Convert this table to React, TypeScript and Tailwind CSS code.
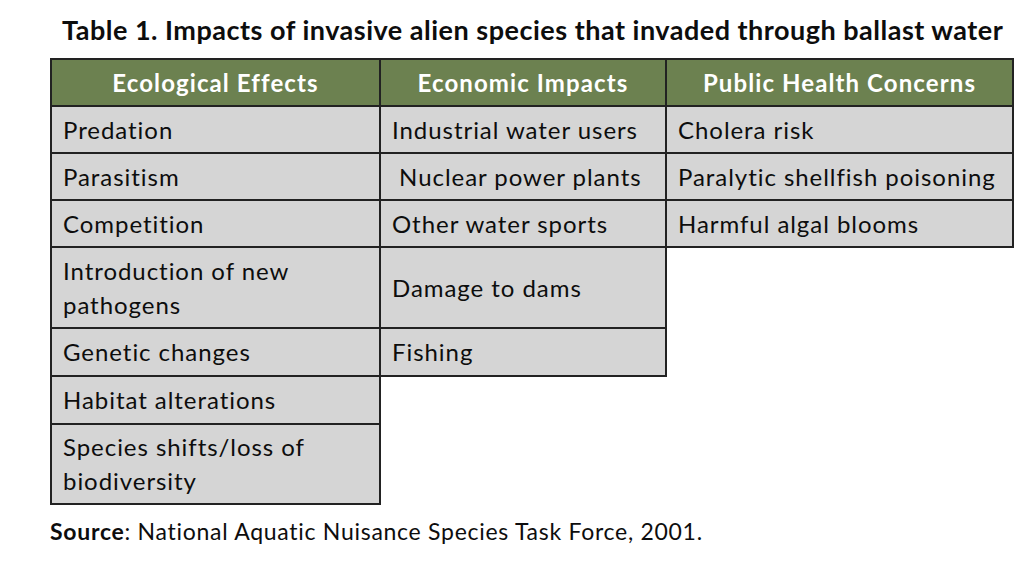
const font = { fontFamily: "Lato, 'Open Sans', sans-serif" };

type Cell = { text: string; col: number; row: number };

const cells: Cell[] = [
  { text: "Predation", col: 1, row: 2 },
  { text: "Parasitism", col: 1, row: 3 },
  { text: "Competition", col: 1, row: 4 },
  { text: "Introduction of new pathogens", col: 1, row: 5 },
  { text: "Genetic changes", col: 1, row: 6 },
  { text: "Habitat alterations", col: 1, row: 7 },
  { text: "Species shifts/loss of biodiversity", col: 1, row: 8 },
  { text: "Industrial water users", col: 2, row: 2 },
  { text: "\u00a0Nuclear power plants", col: 2, row: 3 },
  { text: "Other water sports", col: 2, row: 4 },
  { text: "Damage to dams", col: 2, row: 5 },
  { text: "Fishing", col: 2, row: 6 },
  { text: "Cholera risk", col: 3, row: 2 },
  { text: "Paralytic shellfish poisoning", col: 3, row: 3 },
  { text: "Harmful algal blooms", col: 3, row: 4 },
];

const colClass: Record<number, string> = {
  1: "col-start-1",
  2: "col-start-2",
  3: "col-start-3",
};

const rowClass: Record<number, string> = {
  1: "row-start-1",
  2: "row-start-2",
  3: "row-start-3",
  4: "row-start-4",
  5: "row-start-5",
  6: "row-start-6",
  7: "row-start-7",
  8: "row-start-8",
};

const headers = ["Ecological Effects", "Economic Impacts", "Public Health Concerns"];

export default function App() {
  return (
    <div className="w-[1024px] h-[577px] bg-white text-[#0d0d0d]" style={font}>
      <h1 className="pt-[13px] pl-[62px] text-[27px] font-bold leading-[34px] tracking-[0.5px] whitespace-nowrap">
        Table 1. Impacts of invasive alien species that invaded through ballast water
      </h1>

      {/* Table */}
      <div className="ml-[50px] mt-[11px] grid grid-cols-[329px_286px_347px] grid-rows-[47px_47px_47px_47px_81px_48px_48px_80px] w-[964px]">
        {headers.map((h, i) => (
          <div
            key={h}
            className={`${colClass[i + 1]} row-start-1 -mr-[2px] -mb-[2px] border-2 border-[#222] bg-[#6c8150] flex items-center justify-center text-white font-bold text-[24px] tracking-[1.1px] whitespace-nowrap`}
          >
            {h}
          </div>
        ))}
        {cells.map((c) => (
          <div
            key={c.text}
            className={`${colClass[c.col]} ${rowClass[c.row]} -mr-[2px] -mb-[2px] border-2 border-[#222] bg-[#d5d5d5] flex items-center pl-[11px] pr-1 text-[24px] leading-[34px] tracking-[0.95px]`}
          >
            <span>{c.text}</span>
          </div>
        ))}
      </div>

      <p className="pl-[50px] mt-[13px] text-[23px] leading-[30px] tracking-[0.72px] whitespace-nowrap">
        <span className="font-bold">Source</span>: National Aquatic Nuisance Species Task Force, 2001.
      </p>
    </div>
  );
}
